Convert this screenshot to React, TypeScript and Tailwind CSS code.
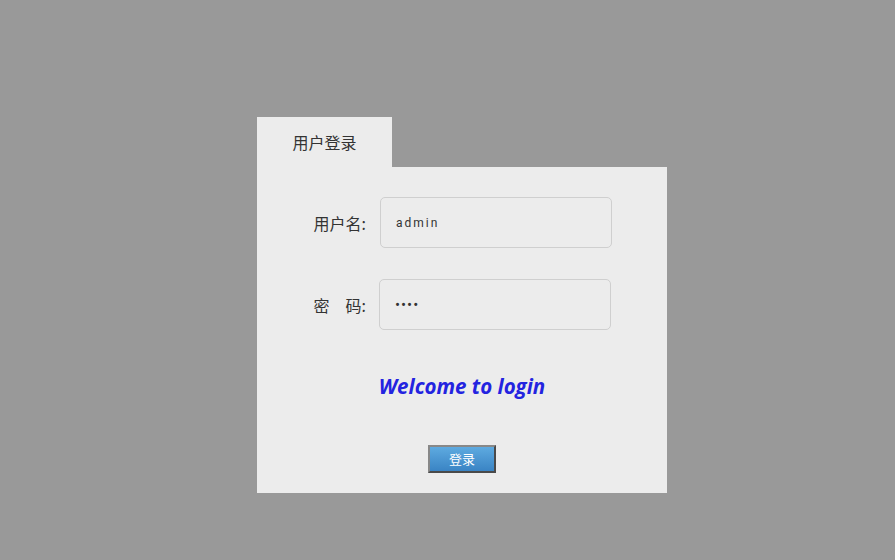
import { useState } from "react";

const cjk = { fontFamily: '"Noto Sans CJK SC", "Noto Sans", sans-serif' };

export default function App() {
  const [user, setUser] = useState("admin");
  const [pwd, setPwd] = useState("1234");

  return (
    <div className="w-[895px] h-[560px] bg-[#999999] pt-[117px] pl-[257px]" style={cjk}>
      <div className="w-[135px] h-[50px] bg-[#ececec] flex items-center justify-center text-[16px] text-[#333]">
        用户登录
      </div>
      <div className="w-[410px] h-[326px] bg-[#ececec] flex flex-col pt-[30px]">
        <div className="flex items-center">
          <label className="w-[109px] text-right text-[16px] text-[#333]">用户名:</label>
          <input
            value={user}
            onChange={(e) => setUser(e.target.value)}
            className="ml-[14px] w-[232px] h-[51px] rounded-[5px] border border-[#cfcfcf] bg-[#ececec] px-[15px] text-[12px] tracking-[2px] text-[#333] outline-none"
            style={{ fontFamily: "Roboto, sans-serif" }}
          />
        </div>
        <div className="flex items-center mt-[31px]">
          <label className="w-[109px] text-right text-[16px] text-[#333]">密　码:</label>
          <input
            type="password"
            value={pwd}
            onChange={(e) => setPwd(e.target.value)}
            className="ml-[13px] w-[232px] h-[51px] rounded-[5px] border border-[#cfcfcf] bg-[#ececec] px-[15px] text-[15px] tracking-[1px] text-[#333] outline-none"
            style={{ fontFamily: "Roboto, sans-serif" }}
          />
        </div>
        <p
          className="mt-[42px] text-center text-[20.5px] font-bold italic text-[#2323e0] leading-[28px]"
          style={{ fontFamily: '"Open Sans", sans-serif' }}
        >
          Welcome to login
        </p>
        <div className="flex justify-center mt-[45px]">
          <button
            className="w-[68px] h-[28px] border-2 border-[#4a4a4a] border-l-[#888] border-t-[#888] bg-gradient-to-b from-[#5eaae0] to-[#3a84c4] text-white text-[13px]"
            style={cjk}
          >
            登录
          </button>
        </div>
      </div>
    </div>
  );
}
